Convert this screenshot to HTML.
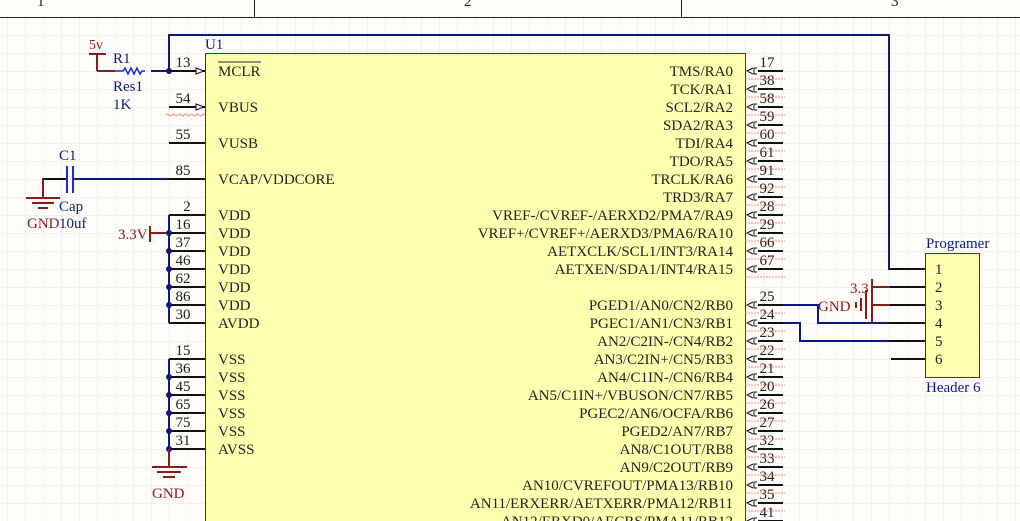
<!DOCTYPE html>
<html><head><meta charset="utf-8"><style>
html,body{margin:0;padding:0;background:#fdfcf8;}
svg{display:block;font-family:"Liberation Serif",serif;}
</style></head><body>
<svg width="1020" height="521" viewBox="0 0 1020 521" xmlns="http://www.w3.org/2000/svg">
<defs>
<pattern id="g" width="18" height="18" patternUnits="userSpaceOnUse" x="7" y="17">
<path d="M0 0H18M0 0V18" stroke="#e8e7e0" stroke-width="1" fill="none"/>
</pattern>
</defs>
<rect width="1020" height="521" fill="#fdfcf8"/>
<rect y="18" width="1020" height="503" fill="url(#g)"/>
<line x1="0" y1="17.5" x2="1020" y2="17.5" stroke="#222" stroke-width="1"/>
<line x1="254.5" y1="0" x2="254.5" y2="17" stroke="#222"/>
<line x1="681.5" y1="0" x2="681.5" y2="17" stroke="#222"/>
<g font-size="15" fill="#222"><text x="37" y="6">1</text><text x="464" y="6">2</text><text x="891" y="6">3</text></g>
<rect x="205.5" y="53.5" width="540" height="480" fill="#ffffb0" stroke="#8b1a1a" stroke-width="1"/>
<text x="205" y="49" font-size="15" fill="#0c1a80">U1</text>
<polyline points="169,71 169,35 889,35 889,269 925,269" fill="none" stroke="#0c1a80" stroke-width="2"/>
<circle cx="169" cy="71" r="3" fill="#0c1a80"/>
<g stroke="#111" stroke-width="2">
<line x1="169" y1="71" x2="205" y2="71"/><line x1="169" y1="107" x2="205" y2="107"/><line x1="169" y1="143" x2="205" y2="143"/><line x1="169" y1="179" x2="205" y2="179"/>
<line x1="169" y1="215" x2="205" y2="215"/><line x1="169" y1="233" x2="205" y2="233"/><line x1="169" y1="251" x2="205" y2="251"/><line x1="169" y1="269" x2="205" y2="269"/><line x1="169" y1="287" x2="205" y2="287"/><line x1="169" y1="305" x2="205" y2="305"/><line x1="169" y1="323" x2="205" y2="323"/>
<line x1="169" y1="359" x2="205" y2="359"/><line x1="169" y1="377" x2="205" y2="377"/><line x1="169" y1="395" x2="205" y2="395"/><line x1="169" y1="413" x2="205" y2="413"/><line x1="169" y1="431" x2="205" y2="431"/><line x1="169" y1="449" x2="205" y2="449"/>
</g>
<g fill="none" stroke="#111" stroke-width="1"><path d="M196 68l8 3-8 3zM196 104l8 3-8 3z" fill="#fff"/></g>
<path d="M166 115q1.5-2 3 0t3 0t3 0t3 0t3 0t3 0t3 0t3 0t3 0t3 0t3 0t3 0t3 0" stroke="#e07050" fill="none" stroke-width="0.8"/>
<g font-size="15" fill="#222" text-anchor="middle">
<text x="183" y="67">13</text><text x="183" y="103">54</text><text x="183" y="139">55</text><text x="183" y="175">85</text>
<text x="187" y="211">2</text><text x="183" y="229">16</text><text x="183" y="247">37</text><text x="183" y="265">46</text><text x="183" y="283">62</text><text x="183" y="301">86</text><text x="183" y="319">30</text>
<text x="183" y="355">15</text><text x="183" y="373">36</text><text x="183" y="391">45</text><text x="183" y="409">65</text><text x="183" y="427">75</text><text x="183" y="445">31</text>
</g>
<g font-size="15" fill="#222">
<text x="218" y="76">MCLR</text><line x1="218" y1="62" x2="261" y2="62" stroke="#222"/>
<text x="218" y="112">VBUS</text><text x="218" y="148">VUSB</text><text x="218" y="184">VCAP/VDDCORE</text>
<text x="218" y="220">VDD</text><text x="218" y="238">VDD</text><text x="218" y="256">VDD</text><text x="218" y="274">VDD</text><text x="218" y="292">VDD</text><text x="218" y="310">VDD</text><text x="218" y="328">AVDD</text>
<text x="218" y="364">VSS</text><text x="218" y="382">VSS</text><text x="218" y="400">VSS</text><text x="218" y="418">VSS</text><text x="218" y="436">VSS</text><text x="218" y="454">AVSS</text>
</g>
<g stroke="#0c1a80" stroke-width="2" fill="none">
<polyline points="169,215 169,323"/><polyline points="169,359 169,449"/>
<line x1="169" y1="233" x2="150" y2="233" stroke="#8b1a1a"/>
</g>
<g fill="#0c1a80"><circle cx="169" cy="233" r="3"/><circle cx="169" cy="251" r="3"/><circle cx="169" cy="269" r="3"/><circle cx="169" cy="287" r="3"/><circle cx="169" cy="305" r="3"/>
<circle cx="169" cy="377" r="3"/><circle cx="169" cy="395" r="3"/><circle cx="169" cy="413" r="3"/><circle cx="169" cy="431" r="3"/><circle cx="169" cy="449" r="3"/></g>
<line x1="150" y1="226" x2="150" y2="242" stroke="#8b1a1a" stroke-width="2"/>
<text x="118" y="239" font-size="15" fill="#8b1a1a">3.3V</text>
<g stroke="#8b1a1a" stroke-width="2"><line x1="169" y1="449" x2="169" y2="467"/><line x1="152" y1="467" x2="187" y2="467"/><line x1="157" y1="472" x2="181" y2="472"/><line x1="163" y1="477" x2="175" y2="477"/></g>
<text x="152" y="498" font-size="15" fill="#8b1a1a">GND</text>
<g stroke="#8b1a1a" stroke-width="2"><line x1="89" y1="54" x2="106" y2="54"/><line x1="97" y1="54" x2="97" y2="71"/><line x1="97" y1="71" x2="115" y2="71"/></g>
<text x="89" y="49" font-size="14" fill="#8b1a1a">5v</text>
<path d="M115 71h8l2-3 3 6 3-6 3 6 3-6 3 6 2-3h3" stroke="#1a2ad0" stroke-width="1.5" fill="none"/>
<line x1="151" y1="71" x2="169" y2="71" stroke="#0c1a80" stroke-width="2"/>
<g font-size="15" fill="#0c1a80"><text x="113" y="63">R1</text><text x="113" y="91">Res1</text><text x="113" y="109">1K</text></g>
<line x1="42" y1="179" x2="66" y2="179" stroke="#111" stroke-width="2"/>
<line x1="74" y1="179" x2="169" y2="179" stroke="#0c1a80" stroke-width="2"/>
<g stroke="#1a2ad0" stroke-width="2"><line x1="67" y1="166" x2="67" y2="193"/><line x1="73" y1="166" x2="73" y2="193"/></g>
<g stroke="#8b1a1a" stroke-width="2"><line x1="43" y1="179" x2="43" y2="198"/><line x1="26" y1="198" x2="60" y2="198"/><line x1="32" y1="203" x2="54" y2="203"/><line x1="38" y1="208" x2="48" y2="208"/></g>
<text x="59" y="160" font-size="15" fill="#0c1a80">C1</text>
<text x="59" y="211" font-size="15" fill="#0c1a80">Cap</text>
<text x="27" y="228" font-size="15" fill="#8b1a1a">GND</text>
<text x="59" y="228" font-size="15" fill="#0c1a80">10uf</text>
<g stroke="#111" stroke-width="2">
<line x1="758" y1="71" x2="783" y2="71"/><line x1="758" y1="89" x2="783" y2="89"/><line x1="758" y1="107" x2="783" y2="107"/><line x1="758" y1="125" x2="783" y2="125"/><line x1="758" y1="143" x2="783" y2="143"/><line x1="758" y1="161" x2="783" y2="161"/><line x1="758" y1="179" x2="783" y2="179"/><line x1="758" y1="197" x2="783" y2="197"/><line x1="758" y1="215" x2="783" y2="215"/><line x1="758" y1="233" x2="783" y2="233"/><line x1="758" y1="251" x2="783" y2="251"/><line x1="758" y1="269" x2="783" y2="269"/>
<line x1="758" y1="305" x2="783" y2="305"/><line x1="758" y1="323" x2="783" y2="323"/><line x1="758" y1="341" x2="783" y2="341"/><line x1="758" y1="359" x2="783" y2="359"/><line x1="758" y1="377" x2="783" y2="377"/><line x1="758" y1="395" x2="783" y2="395"/><line x1="758" y1="413" x2="783" y2="413"/><line x1="758" y1="431" x2="783" y2="431"/><line x1="758" y1="449" x2="783" y2="449"/><line x1="758" y1="467" x2="783" y2="467"/><line x1="758" y1="485" x2="783" y2="485"/><line x1="758" y1="503" x2="783" y2="503"/><line x1="758" y1="521" x2="783" y2="521"/>
</g>
<path stroke="#111" stroke-width="1" fill="none" d="M753 68l-6 3 6 3M757 68h-3v6h3M753 86l-6 3 6 3M757 86h-3v6h3M753 104l-6 3 6 3M757 104h-3v6h3M753 122l-6 3 6 3M757 122h-3v6h3M753 140l-6 3 6 3M757 140h-3v6h3M753 158l-6 3 6 3M757 158h-3v6h3M753 176l-6 3 6 3M757 176h-3v6h3M753 194l-6 3 6 3M757 194h-3v6h3M753 212l-6 3 6 3M757 212h-3v6h3M753 230l-6 3 6 3M757 230h-3v6h3M753 248l-6 3 6 3M757 248h-3v6h3M753 266l-6 3 6 3M757 266h-3v6h3M753 302l-6 3 6 3M757 302h-3v6h3M753 320l-6 3 6 3M757 320h-3v6h3M753 338l-6 3 6 3M757 338h-3v6h3M753 356l-6 3 6 3M757 356h-3v6h3M753 374l-6 3 6 3M757 374h-3v6h3M753 392l-6 3 6 3M757 392h-3v6h3M753 410l-6 3 6 3M757 410h-3v6h3M753 428l-6 3 6 3M757 428h-3v6h3M753 446l-6 3 6 3M757 446h-3v6h3M753 464l-6 3 6 3M757 464h-3v6h3M753 482l-6 3 6 3M757 482h-3v6h3M753 500l-6 3 6 3M757 500h-3v6h3M753 518l-6 3 6 3M757 518h-3v6h3"/>
<g font-size="15" fill="#222" text-anchor="middle">
<text x="767" y="67">17</text><text x="767" y="85">38</text><text x="767" y="103">58</text><text x="767" y="121">59</text><text x="767" y="139">60</text><text x="767" y="157">61</text><text x="767" y="175">91</text><text x="767" y="193">92</text><text x="767" y="211">28</text><text x="767" y="229">29</text><text x="767" y="247">66</text><text x="767" y="265">67</text>
<text x="767" y="301">25</text><text x="767" y="319">24</text><text x="767" y="337">23</text><text x="767" y="355">22</text><text x="767" y="373">21</text><text x="767" y="391">20</text><text x="767" y="409">26</text><text x="767" y="427">27</text><text x="767" y="445">32</text><text x="767" y="463">33</text><text x="767" y="481">34</text><text x="767" y="499">35</text><text x="767" y="517">41</text>
</g>
<g font-size="15" fill="#222" text-anchor="end">
<text x="733" y="76">TMS/RA0</text><text x="733" y="94">TCK/RA1</text><text x="733" y="112">SCL2/RA2</text><text x="733" y="130">SDA2/RA3</text><text x="733" y="148">TDI/RA4</text><text x="733" y="166">TDO/RA5</text><text x="733" y="184">TRCLK/RA6</text><text x="733" y="202">TRD3/RA7</text><text x="733" y="220">VREF-/CVREF-/AERXD2/PMA7/RA9</text><text x="733" y="238">VREF+/CVREF+/AERXD3/PMA6/RA10</text><text x="733" y="256">AETXCLK/SCL1/INT3/RA14</text><text x="733" y="274">AETXEN/SDA1/INT4/RA15</text>
<text x="733" y="310">PGED1/AN0/CN2/RB0</text><text x="733" y="328">PGEC1/AN1/CN3/RB1</text><text x="733" y="346">AN2/C2IN-/CN4/RB2</text><text x="733" y="364">AN3/C2IN+/CN5/RB3</text><text x="733" y="382">AN4/C1IN-/CN6/RB4</text><text x="733" y="400">AN5/C1IN+/VBUSON/CN7/RB5</text><text x="733" y="418">PGEC2/AN6/OCFA/RB6</text><text x="733" y="436">PGED2/AN7/RB7</text><text x="733" y="454">AN8/C1OUT/RB8</text><text x="733" y="472">AN9/C2OUT/RB9</text><text x="733" y="490">AN10/CVREFOUT/PMA13/RB10</text><text x="733" y="508">AN11/ERXERR/AETXERR/PMA12/RB11</text><text x="733" y="526">AN12/ERXD0/AECRS/PMA11/RB12</text>
</g>
<rect x="925.5" y="253.5" width="54" height="124" fill="#ffffb0" stroke="#8b1a1a"/>
<text x="926" y="248" font-size="15" fill="#0c1a80">Programer</text>
<text x="926" y="392" font-size="15" fill="#0c1a80">Header 6</text>
<g font-size="15" fill="#222"><text x="935" y="274">1</text><text x="935" y="292">2</text><text x="935" y="310">3</text><text x="935" y="328">4</text><text x="935" y="346">5</text><text x="935" y="364">6</text></g>
<g stroke="#111" stroke-width="2"><line x1="889" y1="269" x2="925" y2="269"/><line x1="889" y1="287" x2="925" y2="287"/><line x1="889" y1="305" x2="925" y2="305"/><line x1="889" y1="323" x2="925" y2="323"/><line x1="889" y1="341" x2="925" y2="341"/><line x1="891" y1="359" x2="925" y2="359"/></g>
<g stroke="#0c1a80" stroke-width="2" fill="none">
<polyline points="783,305 818,305 818,323 889,323"/>
<polyline points="783,323 800,323 800,341 889,341"/>
</g>
<g stroke="#8b1a1a" stroke-width="2"><line x1="872" y1="279" x2="872" y2="323"/><line x1="872" y1="287" x2="890" y2="287"/><line x1="872" y1="305" x2="890" y2="305"/><line x1="866" y1="290" x2="866" y2="319"/><line x1="861" y1="298" x2="861" y2="311"/><line x1="856" y1="302" x2="856" y2="308"/></g>
<text x="850" y="293" font-size="15" fill="#8b1a1a">3.3</text>
<text x="818" y="311" font-size="15" fill="#8b1a1a">GND</text>
<g stroke="#e07050" stroke-width="0.8" fill="none">
<path d="M745 79h40M745 97h40M745 115h40M745 133h40M745 151h40M745 169h40M745 187h40M745 205h40M745 223h40M745 241h40M745 259h40M745 277h40M745 313h40M745 331h40M745 349h40M745 367h40M745 385h40M745 403h40M745 421h40M745 439h40M745 457h40M745 475h40M745 493h40M745 511h40" stroke-dasharray="2 1"/>
</g>
</svg>
</body></html>
